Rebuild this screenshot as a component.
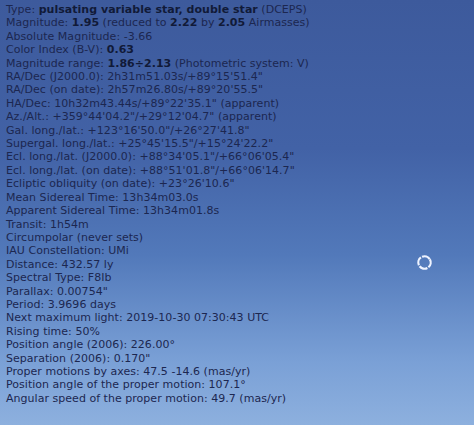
import React from "react";

const B = ({ children }: { children: React.ReactNode }) => (
  <span className="font-bold text-[#111a38]">{children}</span>
);

const lines: React.ReactNode[] = [
  <>Type: <B>pulsating variable star, double star</B> (DCEPS)</>,
  <>Magnitude: <B>1.95</B> (reduced to <B>2.22</B> by <B>2.05</B> Airmasses)</>,
  <>Absolute Magnitude: -3.66</>,
  <>Color Index (B-V): <B>0.63</B></>,
  <>Magnitude range: <B>1.86÷2.13</B> (Photometric system: V)</>,
  <>RA/Dec (J2000.0): 2h31m51.03s/+89°15'51.4"</>,
  <>RA/Dec (on date): 2h57m26.80s/+89°20'55.5"</>,
  <>HA/Dec: 10h32m43.44s/+89°22'35.1" (apparent)</>,
  <>Az./Alt.: +359°44'04.2"/+29°12'04.7" (apparent)</>,
  <>Gal. long./lat.: +123°16'50.0"/+26°27'41.8"</>,
  <>Supergal. long./lat.: +25°45'15.5"/+15°24'22.2"</>,
  <>Ecl. long./lat. (J2000.0): +88°34'05.1"/+66°06'05.4"</>,
  <>Ecl. long./lat. (on date): +88°51'01.8"/+66°06'14.7"</>,
  <>Ecliptic obliquity (on date): +23°26'10.6"</>,
  <>Mean Sidereal Time: 13h34m03.0s</>,
  <>Apparent Sidereal Time: 13h34m01.8s</>,
  <>Transit: 1h54m</>,
  <>Circumpolar (never sets)</>,
  <>IAU Constellation: UMi</>,
  <>Distance: 432.57 ly</>,
  <>Spectral Type: F8Ib</>,
  <>Parallax: 0.00754"</>,
  <>Period: 3.9696 days</>,
  <>Next maximum light: 2019-10-30 07:30:43 UTC</>,
  <>Rising time: 50%</>,
  <>Position angle (2006): 226.00°</>,
  <>Separation (2006): 0.170"</>,
  <>Proper motions by axes: 47.5 -14.6 (mas/yr)</>,
  <>Position angle of the proper motion: 107.1°</>,
  <>Angular speed of the proper motion: 49.7 (mas/yr)</>,
];

export default function App() {
  return (
    <div className="relative w-[474px] h-[425px] overflow-hidden bg-[linear-gradient(to_bottom,#3d5a9c_0%,#4262a6_35%,#5279ba_60%,#7aa0d6_85%,#8db0de_100%)]">
      <div className="pl-[6px] pt-[3px] text-[11px] leading-[13.4px] tracking-[0.03px] text-[#1c2750] font-['DejaVu_Sans',sans-serif] whitespace-nowrap">
        {lines.map((l, i) => (
          <div key={i}>{l}</div>
        ))}
      </div>
      <svg
        className="absolute left-[416px] top-[254px]"
        width="17"
        height="17"
        viewBox="0 0 17 17"
      >
        <circle
          cx="8.5"
          cy="8.5"
          r="6.2"
          fill="none"
          stroke="#eef3ff"
          strokeWidth="2.2"
          strokeDasharray="8.4 1.34"
          transform="rotate(-30 8.5 8.5)"
        />
      </svg>
    </div>
  );
}
